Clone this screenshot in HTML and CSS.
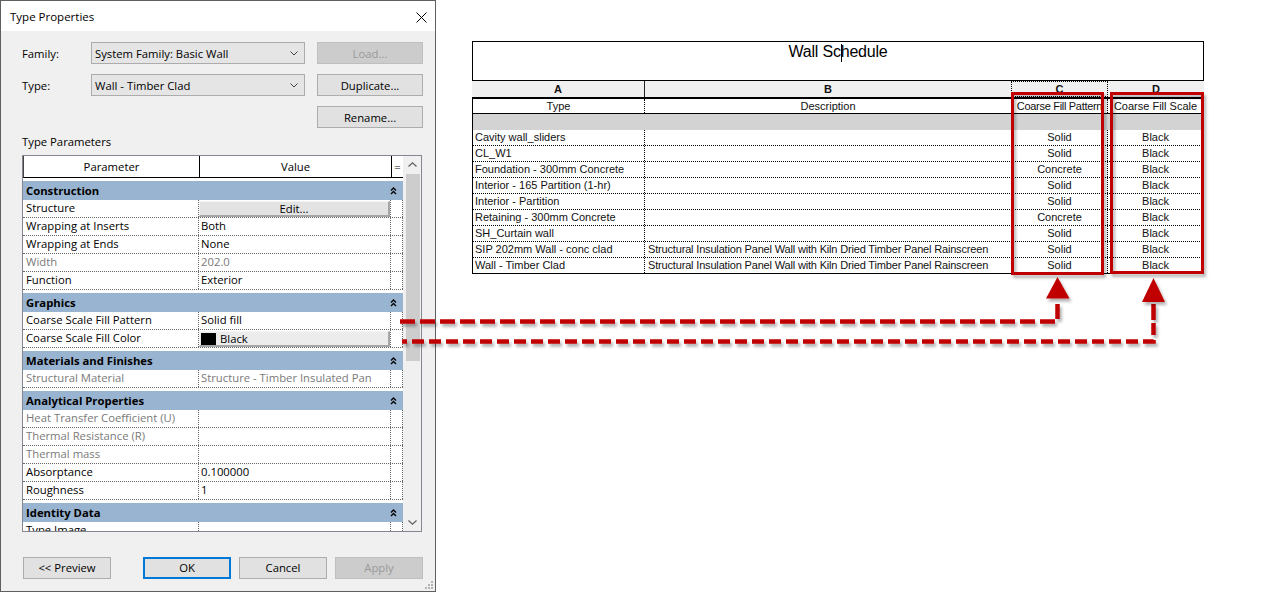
FILE: index.html
```html
<!DOCTYPE html>
<html>
<head>
<meta charset="utf-8">
<title>Type Properties</title>
<link rel="stylesheet" href="styles.css">
</head>
<body>
<div class="page">
  <div class="dialog">
    <div class="titlebar">
      <span class="title">Type Properties</span>
      <svg class="close" width="11" height="11" viewBox="0 0 11 11"><path d="M0.5 0.5L10.5 10.5M10.5 0.5L0.5 10.5" stroke="#000" stroke-width="1" fill="none"/></svg>
    </div>
    <div class="dbody">
      <div class="topgrid">
        <div class="lbl">Family:</div>
        <div class="select"><span>System Family: Basic Wall</span><svg width="8" height="5" viewBox="0 0 8 5"><path d="M0.5 0.5L4 4L7.5 0.5" stroke="#444" fill="none"/></svg></div>
        <div class="btn disabled">Load...</div>
        <div class="lbl">Type:</div>
        <div class="select"><span>Wall - Timber Clad</span><svg width="8" height="5" viewBox="0 0 8 5"><path d="M0.5 0.5L4 4L7.5 0.5" stroke="#444" fill="none"/></svg></div>
        <div class="btn">Duplicate...</div>
        <div></div>
        <div></div>
        <div class="btn">Rename...</div>
      </div>
      <div class="tp-label">Type Parameters</div>
      <div class="pgrid">
        <div class="pmain">
          <div class="phead"><div>Parameter</div><div>Value</div><div>=</div></div>
          <div class="pbody">
            <div class="grp"><span>Construction</span><svg class="dchev" width="7" height="8" viewBox="0 0 7 8"><path d="M1 3.5L3.5 1L6 3.5M1 7L3.5 4.5L6 7" stroke="#000" stroke-width="1.3" fill="none"/></svg></div>
            <div class="row"><div>Structure</div><div class="vbtn-cell"><div class="vbtn center">Edit...</div></div><div></div></div>
            <div class="row"><div>Wrapping at Inserts</div><div class="val">Both</div><div></div></div>
            <div class="row"><div>Wrapping at Ends</div><div class="val">None</div><div></div></div>
            <div class="row gray"><div>Width</div><div class="val">202.0</div><div></div></div>
            <div class="row"><div>Function</div><div class="val">Exterior</div><div></div></div>
            <div class="grp"><span>Graphics</span><svg class="dchev" width="7" height="8" viewBox="0 0 7 8"><path d="M1 3.5L3.5 1L6 3.5M1 7L3.5 4.5L6 7" stroke="#000" stroke-width="1.3" fill="none"/></svg></div>
            <div class="row"><div>Coarse Scale Fill Pattern</div><div class="val">Solid fill</div><div></div></div>
            <div class="row"><div>Coarse Scale Fill Color</div><div class="vbtn-cell"><div class="vbtn color"><span class="swatch"></span><span>Black</span></div></div><div></div></div>
            <div class="grp"><span>Materials and Finishes</span><svg class="dchev" width="7" height="8" viewBox="0 0 7 8"><path d="M1 3.5L3.5 1L6 3.5M1 7L3.5 4.5L6 7" stroke="#000" stroke-width="1.3" fill="none"/></svg></div>
            <div class="row gray"><div>Structural Material</div><div class="val">Structure - Timber Insulated Pan</div><div></div></div>
            <div class="grp"><span>Analytical Properties</span><svg class="dchev" width="7" height="8" viewBox="0 0 7 8"><path d="M1 3.5L3.5 1L6 3.5M1 7L3.5 4.5L6 7" stroke="#000" stroke-width="1.3" fill="none"/></svg></div>
            <div class="row gray"><div>Heat Transfer Coefficient (U)</div><div class="val"></div><div></div></div>
            <div class="row gray"><div>Thermal Resistance (R)</div><div class="val"></div><div></div></div>
            <div class="row gray"><div>Thermal mass</div><div class="val"></div><div></div></div>
            <div class="row"><div>Absorptance</div><div class="val">0.100000</div><div></div></div>
            <div class="row"><div>Roughness</div><div class="val">1</div><div></div></div>
            <div class="grp"><span>Identity Data</span><svg class="dchev" width="7" height="8" viewBox="0 0 7 8"><path d="M1 3.5L3.5 1L6 3.5M1 7L3.5 4.5L6 7" stroke="#000" stroke-width="1.3" fill="none"/></svg></div>
            <div class="row"><div>Type Image</div><div class="val"></div><div></div></div>
          </div>
        </div>
        <div class="vscroll">
          <div class="sbtn"><svg width="9" height="5" viewBox="0 0 9 5"><path d="M0.5 4.5L4.5 0.8L8.5 4.5" stroke="#606060" stroke-width="1.2" fill="none"/></svg></div>
          <div class="thumb"></div>
          <div class="sfill"></div>
          <div class="sbtn"><svg width="9" height="5" viewBox="0 0 9 5"><path d="M0.5 0.5L4.5 4.2L8.5 0.5" stroke="#606060" stroke-width="1.2" fill="none"/></svg></div>
        </div>
      </div>
      <div class="btnrow">
        <div class="btn wide">&lt;&lt; Preview</div>
        <div class="btn wide ok">OK</div>
        <div class="btn wide gap8">Cancel</div>
        <div class="btn wide gap8 disabled">Apply</div>
      </div>
    </div>
    <svg class="grip" width="9" height="9" viewBox="0 0 9 9"><g fill="#b5b5b5"><rect x="6" y="0" width="2" height="2"/><rect x="3" y="3" width="2" height="2"/><rect x="6" y="3" width="2" height="2"/><rect x="0" y="6" width="2" height="2"/><rect x="3" y="6" width="2" height="2"/><rect x="6" y="6" width="2" height="2"/></g></svg>
  </div>

  <div class="schedule">
    <div class="s-title">Wall Sc<span class="caret"></span>hedule</div>
    <div class="s-letters">
      <div class="sl-a">A</div>
      <div class="sl-b">B</div>
      <div class="sl-c">C</div>
      <div class="sl-d">D</div>
    </div>
    <div class="s-row s-head">
      <div class="c">Type</div><div class="c">Description</div><div class="c tight">Coarse Fill Pattern</div><div class="c">Coarse Fill Scale</div>
    </div>
    <div class="s-band"></div>
    <div class="s-row"><div>Cavity wall_sliders</div><div></div><div class="c">Solid</div><div class="c">Black</div></div>
    <div class="s-row"><div>CL_W1</div><div></div><div class="c">Solid</div><div class="c">Black</div></div>
    <div class="s-row"><div>Foundation - 300mm Concrete</div><div></div><div class="c">Concrete</div><div class="c">Black</div></div>
    <div class="s-row"><div>Interior - 165 Partition (1-hr)</div><div></div><div class="c">Solid</div><div class="c">Black</div></div>
    <div class="s-row"><div>Interior - Partition</div><div></div><div class="c">Solid</div><div class="c">Black</div></div>
    <div class="s-row"><div>Retaining - 300mm Concrete</div><div></div><div class="c">Concrete</div><div class="c">Black</div></div>
    <div class="s-row"><div>SH_Curtain wall</div><div></div><div class="c">Solid</div><div class="c">Black</div></div>
    <div class="s-row"><div>SIP 202mm Wall - conc clad</div><div class="desc">Structural Insulation Panel Wall with Kiln Dried Timber Panel Rainscreen</div><div class="c">Solid</div><div class="c">Black</div></div>
    <div class="s-row last"><div>Wall - Timber Clad</div><div class="desc">Structural Insulation Panel Wall with Kiln Dried Timber Panel Rainscreen</div><div class="c">Solid</div><div class="c">Black</div></div>
  </div>

  <svg class="overlay" width="1261" height="593" viewBox="0 0 1261 593">
    <defs>
      <filter id="sh" x="-20%" y="-20%" width="140%" height="140%">
        <feDropShadow dx="2" dy="3" stdDeviation="1.8" flood-color="#000" flood-opacity="0.3"/>
      </filter>
    </defs>
    <g filter="url(#sh)" fill="none" stroke="#c00000">
      <rect x="1012.5" y="93.5" width="90" height="180" stroke-width="3"/>
      <rect x="1111.5" y="93.5" width="91" height="179" stroke-width="3"/>
      <path d="M1057.5 304V321.5H398" stroke-width="4.5" stroke-dasharray="15 5"/>
      <path d="M1153.5 304V341.5H402" stroke-width="4.5" stroke-dasharray="16 3 12 5 12 5 12 5 12 5 12 5 12 5 12 5 12 5 12 5 12 5 12 5 12 5 12 5 12 5 12 5 12 5 12 5 12 5 12 5 12 5 12 5 12 5 12 5 12 5 12 5 12 5 12 5 12 5 12 5 12 5 12 5 12 5 12 5 12 5 12 5 12 5 12 5 12 5 12 5 12 5 12 5 12 5 12 5 12 5 12 5 12 5 12 5"/>
    </g>
    <g filter="url(#sh)" fill="#c00000">
      <polygon points="1057.5,277 1046,298.5 1069.5,298.5"/>
      <polygon points="1153.5,278 1142,302 1165,302"/>
    </g>
  </svg>
</div>
</body>
</html>
```

FILE: styles.css
```css
* { box-sizing: border-box; }

body {
  margin: 0;
  background: #fff;
  font-family: "Open Sans", "Noto Sans", sans-serif;
}

.page {
  position: relative;
  width: 1261px;
  height: 593px;
  display: flex;
  align-items: flex-start;
  overflow: hidden;
}

/* ---------- Dialog ---------- */
.dialog {
  position: relative;
  flex: none;
  width: 436px;
  height: 592px;
  border: 1px solid #5f5f5f;
  background: #f0f0f0;
  font-size: 11.3px;
  color: #000;
}

.titlebar {
  height: 30px;
  background: #fff;
  display: flex;
  align-items: center;
  justify-content: space-between;
  padding: 0 8px 0 9px;
  font-size: 11.5px;
}

.close { display: block; margin-top: 2px; }

.dbody { padding: 11px 0 0 21px; }

.topgrid {
  display: grid;
  grid-template-columns: 57px 214px 106px;
  grid-template-rows: 22px 22px 22px;
  column-gap: 12px;
  row-gap: 10px;
}

.lbl { display: flex; align-items: center; }

.select {
  display: flex;
  align-items: center;
  justify-content: space-between;
  padding: 0 6px 0 3px;
  border: 1px solid #acacac;
  background: #e5e5e5;
}

.btn {
  display: flex;
  align-items: center;
  justify-content: center;
  height: 22px;
  border: 1px solid #adadad;
  background: #e1e1e1;
  color: #000;
}

.btn.disabled {
  background: #cccccc;
  border-color: #bfbfbf;
  color: #9a9a9a;
}

.tp-label {
  margin-top: 6px;
  height: 16px;
  line-height: 16px;
}

.pgrid {
  margin-top: 5px;
  width: 400px;
  height: 377px;
  display: flex;
  border: 1px solid #828790;
  background: #fff;
}

.pmain {
  width: 380px;
  display: flex;
  flex-direction: column;
}

.phead {
  flex: none;
  height: 22px;
  display: grid;
  grid-template-columns: 176px 192px 12px;
  border-bottom: 1px solid #000;
  border-left: 1px solid #444;
}

.phead div {
  display: flex;
  align-items: center;
  justify-content: center;
  border-right: 1px solid #000;
  padding-bottom: 1px;
}

.pbody {
  flex: 1;
  overflow: hidden;
}

.grp {
  margin-top: 3px;
  height: 19px;
  display: flex;
  align-items: center;
  justify-content: space-between;
  padding: 0 6px 1px 3px;
  background: #99b4d1;
  font-weight: bold;
}

.dchev { display: block; margin-top: 1px; }

.row {
  height: 18px;
  display: grid;
  grid-template-columns: 176px 192px 12px;
  border-bottom: 1px dotted #666;
}

.row > div {
  border-right: 1px dotted #666;
  padding-left: 3px;
  line-height: 16px;
  white-space: nowrap;
  overflow: hidden;
}

.row > div.val { padding-left: 2px; }

.row.gray { color: #7a7a7a; }

.row > div.vbtn-cell { padding: 1px 0 0 0; }

.vbtn {
  height: 16px;
  display: flex;
  align-items: center;
  background: #e3e3e3;
  border-top: 1px solid #f4f4f4;
  border-left: 1px solid #f4f4f4;
  border-right: 2px solid #a6a6a6;
  border-bottom: 2px solid #a6a6a6;
}

.vbtn.center { justify-content: center; }

.vbtn.color {
  background: #ececec;
  padding-left: 1px;
}

.swatch {
  width: 15px;
  height: 12px;
  background: #000;
  margin-right: 4px;
}

.vscroll {
  width: 18px;
  display: flex;
  flex-direction: column;
  background: #f0f0f0;
}

.sbtn {
  height: 17px;
  display: flex;
  align-items: center;
  justify-content: center;
  padding-left: 1px;
}

.thumb {
  margin: 1px 0 0 3px;
  width: 14px;
  height: 187px;
  background: #cdcdcd;
}

.sfill { flex: 1; }

.btnrow {
  margin-top: 25px;
  display: flex;
  padding-left: 1px;
}

.btnrow .btn { padding-bottom: 1px; }

.btn.wide { width: 88px; }

.btn.ok {
  margin-left: 32px;
  border: 2px solid #0078d7;
}

.btn.gap8 { margin-left: 8px; }

.grip {
  position: absolute;
  right: 1px;
  bottom: 1px;
}

/* ---------- Schedule ---------- */
.schedule {
  flex: none;
  width: 732px;
  margin: 41px 0 0 36px;
  font-family: "Liberation Sans", Arial, sans-serif;
  font-size: 11px;
  color: #111;
}

.s-title {
  height: 40px;
  border: 1px solid #000;
  text-align: center;
  font-size: 16px;
  line-height: 18px;
  padding-top: 1px;
  color: #000;
  letter-spacing: -0.2px;
}

.caret {
  display: inline-block;
  width: 0;
  height: 18px;
  border-left: 1px solid #000;
  margin-right: -1px;
  vertical-align: -5px;
}

.s-letters {
  height: 18px;
  display: grid;
  grid-template-columns: 173px 366px 97px 96px;
  background: #f0f0f0;
  border-bottom: 2px solid #000;
  font-weight: bold;
  text-align: center;
  line-height: 16px;
}

.sl-a { border-right: 1px solid #222; }
.sl-c { border: 1px dotted #000; line-height: 14px; }

.s-row {
  height: 16px;
  display: grid;
  grid-template-columns: 172px 367px 96px 95px;
  border-left: 1px solid #000;
  border-right: 1px solid #000;
  border-bottom: 1px dotted #000;
}

.s-row > div {
  line-height: 15px;
  white-space: nowrap;
  overflow: hidden;
  border-right: 1px dotted #000;
  padding-left: 3px;
}

.s-row > div:first-child { padding-left: 2px; }
.s-row > div:last-child { border-right: none; }
.s-row > div.c { text-align: center; padding-left: 0; }
.s-row > div.desc { letter-spacing: -0.17px; }
.s-row > div.tight { letter-spacing: -0.3px; overflow: visible; }

.s-row.s-head {
  height: 15px;
  border-bottom: 1px solid #000;
}

.s-row.s-head > div { line-height: 14px; }

.s-row.last { border-bottom: 1px solid #000; }

.s-band {
  height: 16px;
  background: #d3d3d3;
  border-left: 1px solid #000;
  border-right: 1px solid #000;
}

/* ---------- Overlay arrows ---------- */
.overlay {
  position: absolute;
  left: 0;
  top: 0;
  pointer-events: none;
}
```
